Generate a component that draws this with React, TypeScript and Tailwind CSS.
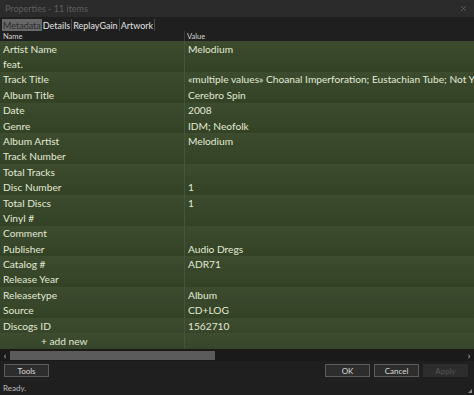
import { X } from "lucide-react";

const rows: [string, string][] = [
  ["Artist Name", "Melodium"],
  ["feat.", ""],
  ["Track Title", "«multiple values» Choanal Imperforation; Eustachian Tube; Not Yet; Ouch; Sleeping Tonight"],
  ["Album Title", "Cerebro Spin"],
  ["Date", "2008"],
  ["Genre", "IDM; Neofolk"],
  ["Album Artist", "Melodium"],
  ["Track Number", ""],
  ["Total Tracks", ""],
  ["Disc Number", "1"],
  ["Total Discs", "1"],
  ["Vinyl #", ""],
  ["Comment", ""],
  ["Publisher", "Audio Dregs"],
  ["Catalog #", "ADR71"],
  ["Release Year", ""],
  ["Releasetype", "Album"],
  ["Source", "CD+LOG"],
  ["Discogs ID", "1562710"],
];

const tabs = ["Metadata", "Details", "ReplayGain", "Artwork"];

export default function App() {
  return (
    <div className="w-[474px] h-[395px] bg-[#1f1f1f] flex flex-col overflow-hidden font-['Lato',sans-serif] select-none">
      {/* title bar */}
      <div className="h-[17px] shrink-0 bg-[#2b2b2b] flex items-center justify-between pl-[5px] pr-[6px]">
        <span className="text-[9px] text-[#5e5e5e] leading-none">Properties - 11 items</span>
        <X className="w-[9px] h-[9px] text-[#6a6a6a]" strokeWidth={2} />
      </div>

      {/* tabs */}
      <div className="h-[12px] mt-[2px] shrink-0 flex items-stretch pl-[2px] text-[9px] leading-none">
        {tabs.map((t, i) => (
          <div
            key={t}
            className={
              i === 0
                ? "px-[1px] flex items-center bg-[#686868] text-[#2c2c2c]"
                : "px-[1px] flex items-center text-[#e2e2e2] border-r border-[#4a4a4a]"
            }
          >
            {t}
          </div>
        ))}
      </div>

      {/* column header */}
      <div className="h-[10px] shrink-0 flex text-[7.5px] text-[#d4d4d4] leading-none">
        <div className="w-[184px] pl-[3px] flex items-end pb-[1px]">Name</div>
        <div className="flex-1 pl-[2px] border-l border-[#3a3a3a] flex items-end pb-[1px]">Value</div>
      </div>

      {/* table */}
      <div className="h-[308px] shrink-0 bg-[#374628] overflow-hidden text-[10.2px] text-[#e2e9d6] leading-none">
        {rows.map(([k, v], i) => (
          <div
            key={k}
            className={
              "h-[15.4px] flex items-center " +
              (i % 2 === 0
                ? "bg-gradient-to-b from-[#3d4c2e] to-[#37462a]"
                : "bg-gradient-to-b from-[#384729] to-[#334225]")
            }
          >
            <div className="w-[184px] pl-[3px] whitespace-nowrap">{k}</div>
            <div className="flex-1 h-full pl-[3px] border-l border-[#465538] flex items-center whitespace-nowrap overflow-hidden">
              {v}
            </div>
          </div>
        ))}
        <div className="h-[15.4px] flex items-center bg-gradient-to-b from-[#3d4c2e] to-[#37462a]">
          <div className="w-[184px] pl-[41px] whitespace-nowrap">+ add new</div>
          <div className="flex-1 h-full border-l border-[#465538]" />
        </div>
      </div>

      {/* horizontal scrollbar */}
      <div className="h-[12px] shrink-0 bg-[#1a1a1a] flex items-center text-[#cfcfcf]">
        <div className="w-[10px] flex justify-center text-[9px] leading-none">‹</div>
        <div className="w-[205px] h-[9px] bg-[#5b5b5b]" />
        <div className="flex-1" />
        <div className="w-[10px] flex justify-center text-[9px] leading-none">›</div>
      </div>

      {/* buttons */}
      <div className="h-[13px] mt-[3px] shrink-0 flex items-stretch px-[4px] text-[8px] leading-none">
        <button className="w-[45px] border border-[#5c5c5c] bg-[#2d2d2d] text-[#dcdcdc] flex items-center justify-center">
          Tools
        </button>
        <div className="flex-1" />
        <div className="flex gap-[4px] pr-[2px]">
          <button className="w-[45px] border border-[#5c5c5c] bg-[#2d2d2d] text-[#dcdcdc] flex items-center justify-center">
            OK
          </button>
          <button className="w-[45px] border border-[#5c5c5c] bg-[#2d2d2d] text-[#dcdcdc] flex items-center justify-center">
            Cancel
          </button>
          <button className="w-[45px] border border-[#2d2d2d] bg-[#2d2d2d] text-[#575757] flex items-center justify-center">
            Apply
          </button>
        </div>
      </div>

      {/* status */}
      <div className="flex-1 flex items-center justify-between pl-[3px] pr-[1px] pt-[3px] text-[8px] text-[#bdbdbd] leading-none">
        <span>Ready.</span>
        <svg width="6" height="6" viewBox="0 0 6 6" className="self-end mb-[1px]">
          <path d="M5 1v4H1z" fill="#8a8a8a" />
        </svg>
      </div>
    </div>
  );
}
